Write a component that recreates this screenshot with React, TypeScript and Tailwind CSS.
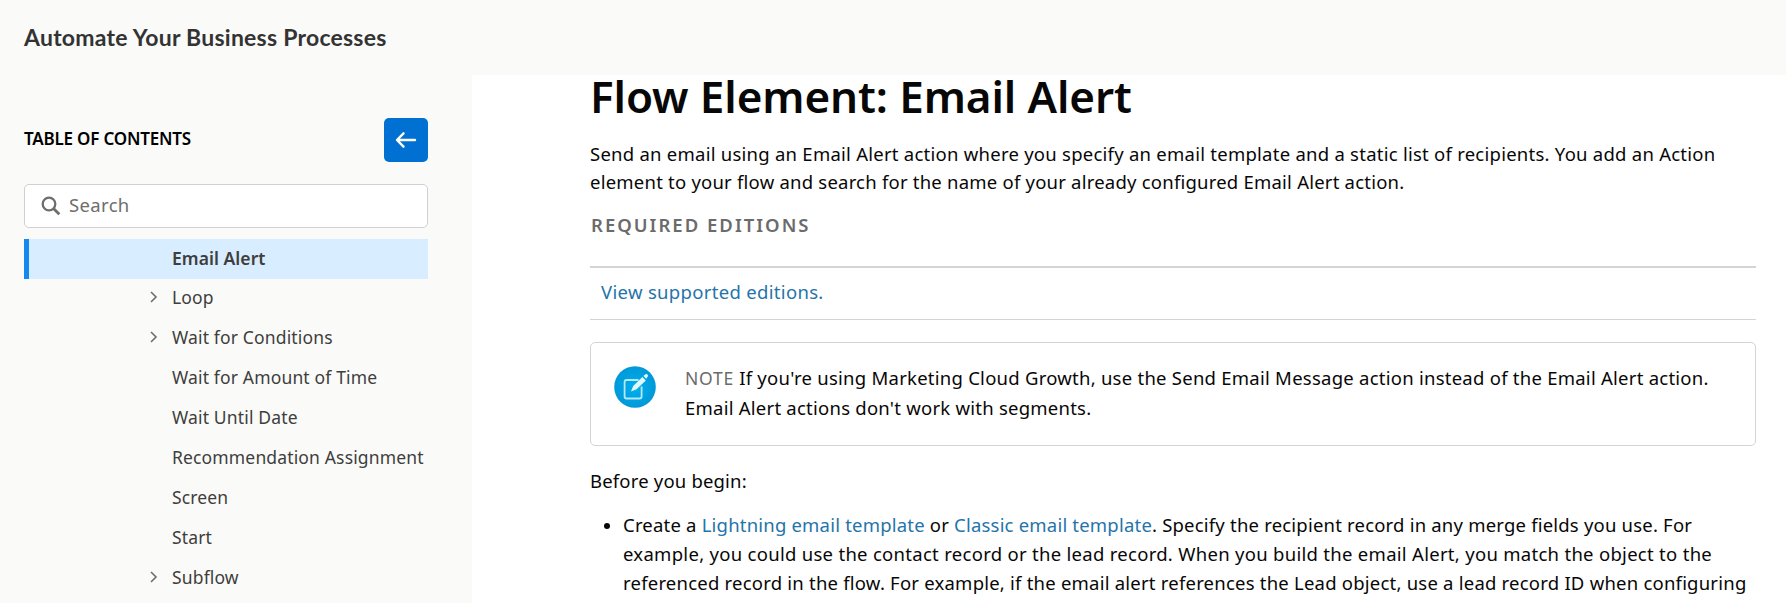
import type { ReactNode } from "react";

const toc = [
  { label: "Email Alert", active: true },
  { label: "Loop", expandable: true },
  { label: "Wait for Conditions", expandable: true },
  { label: "Wait for Amount of Time" },
  { label: "Wait Until Date" },
  { label: "Recommendation Assignment" },
  { label: "Screen" },
  { label: "Start" },
  { label: "Subflow", expandable: true },
];

function Line({ className = "", children }: { className?: string; children: ReactNode }) {
  return <span className={`block whitespace-nowrap ${className}`}>{children}</span>;
}

function DocLink({ children }: { children: ReactNode }) {
  return <a href="#" className="text-[#2574a9]">{children}</a>;
}

function NoteIcon() {
  return (
    <svg viewBox="0 0 42 42" className="mt-px h-[42px] w-[42px] shrink-0">
      <defs>
        <radialGradient id="note">
          <stop offset="0" stopColor="#00b0ee" />
          <stop offset="1" stopColor="#0098d8" />
        </radialGradient>
      </defs>
      <circle cx="21" cy="21" r="20.8" fill="url(#note)" />
      <path d="M24.5 14H12.6a2 2 0 0 0-2 2v14.5a2 2 0 0 0 2 2h13a2 2 0 0 0 2-2V20.5" fill="none" stroke="#b4e8fa" strokeWidth="1.8" />
      <path d="M17 25.5l2.2-5.6L28.4 11l3.4 3.4-9.2 8.9zM29.4 10l1.7-1.4a1.5 1.5 0 0 1 2.4 2.4l-1.4 1.7z" fill="#e2f8ff" />
    </svg>
  );
}

export default function App() {
  return (
    <div className="flex h-[603px] w-full flex-col overflow-hidden bg-[#fafaf9] font-['Noto_Sans',sans-serif] text-[18.5px] text-[#080707]">
      <header className="flex h-[75px] shrink-0 items-center pl-6">
        <span className="whitespace-nowrap font-['Lato',sans-serif] text-[23px] font-bold tracking-[0.24px] text-[#333]">Automate Your Business Processes</span>
      </header>

      <div className="flex min-h-0 flex-1">
        {/* sidebar */}
        <aside className="w-[472px] shrink-0 pl-6 pr-11 pt-[43px]">
          <div className="flex items-center justify-between">
            <h2 className="mb-0.5 whitespace-nowrap text-[17px] font-semibold tracking-[-0.2px] text-black">TABLE OF CONTENTS</h2>
            <button className="grid h-11 w-11 place-items-center rounded-[5px] bg-[#0070d2]">
              <svg viewBox="0 0 24 24" className="h-6 w-6" fill="none" stroke="white" strokeWidth="2.4" strokeLinecap="round" strokeLinejoin="round">
                <path d="M21 12H3M9.5 5.3L3 12l6.5 6.7" />
              </svg>
            </button>
          </div>

          <div className="mt-[22px] flex h-11 items-center rounded-[5px] border border-[#d0d0ce] bg-white pl-4">
            <svg viewBox="0 0 20 20" className="h-5 w-5 shrink-0" fill="none" stroke="#706e6b" strokeWidth="2.3">
              <circle cx="8" cy="8" r="6.3" />
              <path d="M12.5 12.5l5.8 5.8" strokeWidth="2.8" />
            </svg>
            <span className="mb-0.5 ml-2 tracking-[0.35px] text-[#706e6b]">Search</span>
          </div>

          <ul className="mt-[11px]">
            {toc.map((item) => (
              <li
                key={item.label}
                className={`flex h-10 items-center whitespace-nowrap text-[17.5px] text-[#3e3e3c] ${
                  item.active
                    ? "border-l-[5px] border-[#1589ee] bg-[#d8edff] pl-[143px] font-semibold tracking-[0.05px]"
                    : "pl-[126px] tracking-[0.15px]"
                }`}
              >
                {!item.active && (
                  <span className="mb-1 w-[22px] shrink-0">
                    {item.expandable && (
                      <svg viewBox="0 0 8 12" className="h-3 w-2" fill="none" stroke="#706e6b" strokeWidth="1.6">
                        <path d="M1 1l5 5-5 5" />
                      </svg>
                    )}
                  </span>
                )}
                <span className={item.active ? "mb-0.5" : "mb-[3px]"}>{item.label}</span>
              </li>
            ))}
          </ul>
        </aside>

        {/* article */}
        <main className="min-w-0 flex-1 bg-white pl-[118px] pr-[30px]">
          <h1 className="whitespace-nowrap text-[44px] font-semibold leading-[43px] tracking-[-0.1px]">Flow Element: Email Alert</h1>

          <p className="mt-[22px] leading-7">
            <Line className="tracking-[0.25px]">Send an email using an Email Alert action where you specify an email template and a static list of recipients. You add an Action</Line>
            <Line className="tracking-[0.22px]">element to your flow and search for the name of your already configured Email Alert action.</Line>
          </p>

          <h2 className="mt-[15px] pl-px text-[18.5px] font-semibold leading-7 tracking-[2px] text-[#6b6b6b]">REQUIRED EDITIONS</h2>

          <div className="mt-[27px] flex h-[54px] items-center border-b border-t-2 border-[#d4d4d4] pl-[11px]">
            <span className="mb-1 tracking-[0.32px]"><DocLink>View supported editions.</DocLink></span>
          </div>

          <div className="mt-[22px] flex h-[104px] rounded-[5px] border border-[#d4d4d4] pl-[23px] pt-[22px]">
            <NoteIcon />
            <p className="ml-[29px] mt-[-2px] leading-[29px]">
              <Line className="tracking-[0.25px]"><span className="text-[17.5px] tracking-[0.8px] text-[#6b6b6b]">NOTE</span> If you're using Marketing Cloud Growth, use the Send Email Message action instead of the Email Alert action.</Line>
              <Line className="tracking-[0.24px]">Email Alert actions don't work with segments.</Line>
            </p>
          </div>

          <p className="mt-[20px] leading-[29px] tracking-[0.18px]">Before you begin:</p>

          <ul className="mt-[15px]">
            <li className="flex">
              <span className="ml-[14px] mt-[13px] h-1.5 w-1.5 shrink-0 rounded-full bg-[#080707]" />
              <div className="ml-[13px] leading-[29px]">
                <Line className="tracking-[0.2px]">Create a <DocLink>Lightning email template</DocLink> or <DocLink>Classic email template</DocLink>. Specify the recipient record in any merge fields you use. For</Line>
                <Line className="tracking-[0.29px]">example, you could use the contact record or the lead record. When you build the email Alert, you match the object to the</Line>
                <Line className="tracking-[0.22px]">referenced record in the flow. For example, if the email alert references the Lead object, use a lead record ID when configuring</Line>
              </div>
            </li>
          </ul>
        </main>
      </div>
    </div>
  );
}
